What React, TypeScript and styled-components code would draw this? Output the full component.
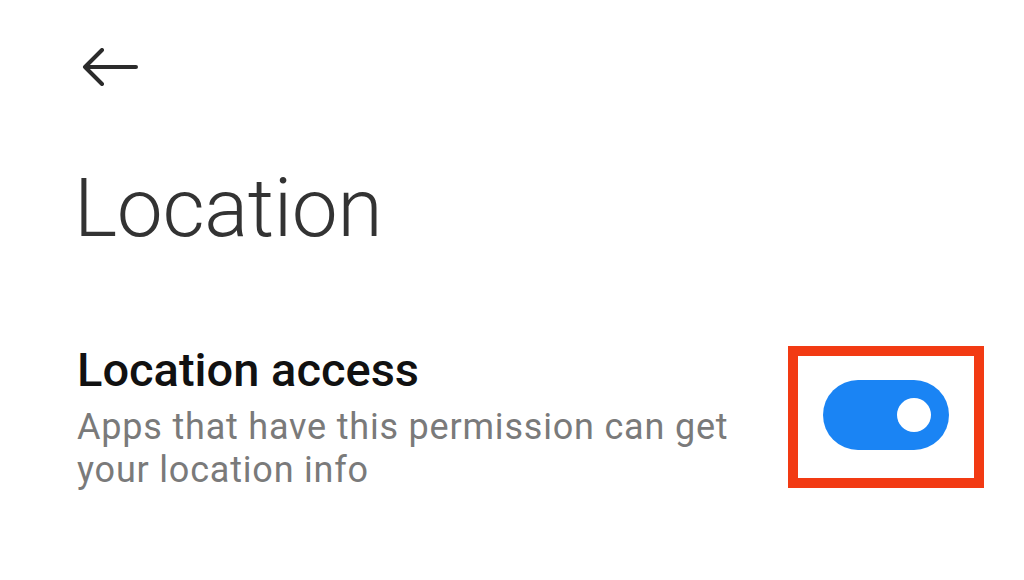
import React from "react";
import styled, { createGlobalStyle } from "styled-components";

const GlobalStyle = createGlobalStyle`
  html, body {
    margin: 0;
    padding: 0;
    background: #ffffff;
  }
  body {
    font-family: Roboto, "Noto Sans", sans-serif;
  }
`;

const Screen = styled.div`
  width: 1024px;
  height: 580px;
  box-sizing: border-box;
  display: flex;
  flex-direction: column;
  background: #ffffff;
  padding: 48px 40px 0 77px;
  overflow: hidden;
`;

const BackButton = styled.button`
  display: flex;
  width: 56px;
  height: 38px;
  padding: 0;
  margin-left: 5px;
  border: none;
  background: none;
  color: #2b2b2b;
`;

const Title = styled.h1`
  margin: 81px 0 0 -3px;
  font-size: 82px;
  font-weight: 300;
  line-height: 82px;
  color: #333333;
  letter-spacing: -0.4px;
`;

const SettingRow = styled.div`
  display: flex;
  justify-content: space-between;
  align-items: flex-start;
  margin-top: 97px;
`;

const TextBlock = styled.div`
  display: flex;
  flex-direction: column;
  width: 680px;
`;

const SettingTitle = styled.div`
  font-size: 47px;
  font-weight: 500;
  line-height: 46px;
  color: #111111;
  margin-top: 1px;
`;

const SettingDescription = styled.div`
  font-size: 36px;
  font-weight: 400;
  line-height: 43px;
  letter-spacing: 0.8px;
  color: #7a7a7a;
  margin-top: 13px;
`;

const Highlight = styled.div`
  width: 196px;
  height: 142px;
  box-sizing: border-box;
  border: 10px solid #f23a13;
  display: flex;
  align-items: center;
  justify-content: center;
`;

const Toggle = styled.div<{ $on: boolean }>`
  width: 126px;
  height: 70px;
  border-radius: 35px;
  background: ${(p) => (p.$on ? "#1a84f4" : "#d5d5d5")};
  display: flex;
  align-items: center;
  justify-content: ${(p) => (p.$on ? "flex-end" : "flex-start")};
  padding: 0 18px;
  box-sizing: border-box;
  margin-bottom: 4px;
`;

const Knob = styled.div`
  width: 34px;
  height: 34px;
  border-radius: 50%;
  background: #ffffff;
`;

export default function App() {
  return (
    <>
      <GlobalStyle />
      <Screen>
        <BackButton aria-label="Back">
          <svg width="56" height="38" viewBox="0 0 56 38" fill="none">
            <path
              d="M3 19H54M20 2L3 19L20 36"
              stroke="currentColor"
              strokeWidth="4"
              strokeLinecap="round"
              strokeLinejoin="round"
            />
          </svg>
        </BackButton>
        <Title>Location</Title>
        <SettingRow>
          <TextBlock>
            <SettingTitle>Location access</SettingTitle>
            <SettingDescription>
              Apps that have this permission can get your location info
            </SettingDescription>
          </TextBlock>
          <Highlight>
            <Toggle $on>
              <Knob />
            </Toggle>
          </Highlight>
        </SettingRow>
      </Screen>
    </>
  );
}
